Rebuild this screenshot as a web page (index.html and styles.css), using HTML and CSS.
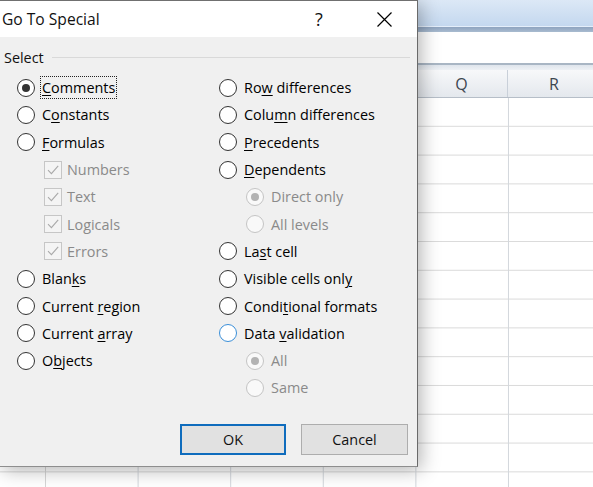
FILE: index.html
```html
<!DOCTYPE html>
<html>
<head>
<meta charset="utf-8">
<title>Go To Special</title>
<link rel="stylesheet" href="styles.css">
</head>
<body>
<div class="screen">
  <div class="excel">
    <div class="ribbon"></div>
    <div class="ribbon-edge"></div>
    <div class="formula"></div>
    <div class="hdr-sep"></div>
    <div class="colhdr">
      <div class="ch ch-first"></div>
      <div class="ch"></div>
      <div class="ch"></div>
      <div class="ch"></div>
      <div class="ch"></div>
      <div class="ch">Q</div>
      <div class="ch">R</div>
    </div>
    <div class="grid"></div>
  </div>

  <div class="dialog">
    <div class="titlebar">
      <div class="title">Go To Special</div>
      <div class="tb-btn help">?</div>
      <div class="tb-btn close">
        <svg width="15" height="15" viewBox="0 0 15 15"><path d="M0.5 0.5 L14.5 14.5 M14.5 0.5 L0.5 14.5" stroke="#000" stroke-width="1.2" fill="none"/></svg>
      </div>
    </div>
    <div class="body">
      <div class="legend">Select</div>
      <div class="options">
        <div class="col">
          <div class="opt"><span class="radio checked"></span><span class="focus"><u>C</u>omments</span></div>
          <div class="opt"><span class="radio"></span><span>C<u>o</u>nstants</span></div>
          <div class="opt"><span class="radio"></span><span><u>F</u>ormulas</span></div>
          <div class="opt sub disabled"><span class="check"><svg width="16" height="16" viewBox="0 0 16 16"><path d="M3 8.2 L6.4 11.6 L13.2 3.8" stroke="#a9a9a9" stroke-width="1.1" fill="none"/></svg></span><span>Numbers</span></div>
          <div class="opt sub disabled"><span class="check"><svg width="16" height="16" viewBox="0 0 16 16"><path d="M3 8.2 L6.4 11.6 L13.2 3.8" stroke="#a9a9a9" stroke-width="1.1" fill="none"/></svg></span><span>Text</span></div>
          <div class="opt sub disabled"><span class="check"><svg width="16" height="16" viewBox="0 0 16 16"><path d="M3 8.2 L6.4 11.6 L13.2 3.8" stroke="#a9a9a9" stroke-width="1.1" fill="none"/></svg></span><span>Logicals</span></div>
          <div class="opt sub disabled"><span class="check"><svg width="16" height="16" viewBox="0 0 16 16"><path d="M3 8.2 L6.4 11.6 L13.2 3.8" stroke="#a9a9a9" stroke-width="1.1" fill="none"/></svg></span><span>Errors</span></div>
          <div class="opt"><span class="radio"></span><span>Blan<u>k</u>s</span></div>
          <div class="opt"><span class="radio"></span><span>Current <u>r</u>egion</span></div>
          <div class="opt"><span class="radio"></span><span>Current <u>a</u>rray</span></div>
          <div class="opt"><span class="radio"></span><span>O<u>b</u>jects</span></div>
        </div>
        <div class="col">
          <div class="opt"><span class="radio"></span><span>Ro<u>w</u> differences</span></div>
          <div class="opt"><span class="radio"></span><span>Colu<u>m</u>n differences</span></div>
          <div class="opt"><span class="radio"></span><span><u>P</u>recedents</span></div>
          <div class="opt"><span class="radio"></span><span><u>D</u>ependents</span></div>
          <div class="opt sub disabled"><span class="radio checked"></span><span>Direct only</span></div>
          <div class="opt sub disabled"><span class="radio"></span><span>All levels</span></div>
          <div class="opt"><span class="radio"></span><span>La<u>s</u>t cell</span></div>
          <div class="opt"><span class="radio"></span><span>Visible cells onl<u>y</u></span></div>
          <div class="opt"><span class="radio"></span><span>Condi<u>t</u>ional formats</span></div>
          <div class="opt"><span class="radio hover"></span><span>Data <u>v</u>alidation</span></div>
          <div class="opt sub disabled"><span class="radio checked"></span><span>All</span></div>
          <div class="opt sub disabled"><span class="radio"></span><span>Same</span></div>
        </div>
      </div>
      <div class="buttons">
        <div class="btn default">OK</div>
        <div class="btn">Cancel</div>
      </div>
    </div>
  </div>
</div>
</body>
</html>
```

FILE: styles.css
```css
* { box-sizing: border-box; }
html, body { margin: 0; padding: 0; }
body { width: 593px; height: 487px; overflow: hidden; background: #fff; }

.screen {
  position: relative;
  width: 593px;
  height: 487px;
  overflow: hidden;
  font-family: "Open Sans", "Noto Sans", sans-serif;
}

/* ---------- Excel background ---------- */
.excel {
  display: flex;
  flex-direction: column;
  width: 593px;
  height: 487px;
  background: #fff;
}
.ribbon {
  height: 27px;
  background: linear-gradient(#dce8f6, #c4d8ef);
  border-bottom: 1px solid #e4eefa;
}
.ribbon-edge {
  height: 5px;
  background: linear-gradient(#8ea4bf, #a9bbd0);
}
.formula {
  height: 31px;
  background: #fff;
}
.hdr-sep {
  height: 7px;
  background: linear-gradient(#a9b6c4 0, #a9b6c4 2px, #dfe5ec 2px, #eef1f5 7px);
}
.colhdr {
  display: grid;
  grid-template-columns: 45px 93px 93px 92px 93px 92px 93px;
  height: 28px;
  background: linear-gradient(#f7f8fa, #e4e8ed);
  border-bottom: 1px solid #b6bec8;
}
.ch {
  border-right: 1px solid #c9d0d9;
  display: flex;
  align-items: center;
  justify-content: center;
  font-size: 16px;
  color: #3d4650;
}
.grid {
  flex: 1;
  background-color: #fff;
  background-image:
    linear-gradient(#d6d6d6, #d6d6d6),
    linear-gradient(90deg, #d3d7dc 1px, transparent 1px),
    linear-gradient(#dadada 1px, transparent 1px);
  background-size: 1px 100%, 92.6px 100%, 100% 28.8px;
  background-position: 45px 0, 45px 0, 0 27.8px;
  background-repeat: no-repeat, repeat-x, repeat-y;
}

/* ---------- Dialog ---------- */
.dialog {
  position: absolute;
  left: 0;
  top: 0;
  width: 418px;
  height: 467px;
  background: #f0f0f0;
  border-top: 1px solid #707070;
  border-right: 1px solid #6a6a6a;
  border-bottom: 1px solid #8e8e8e;
  box-shadow: 3px 3px 18px rgba(0, 0, 0, 0.3);
  display: flex;
  flex-direction: column;
  font-size: 14.4px;
  color: #000;
}
.titlebar {
  height: 36px;
  background: #fff;
  display: flex;
  align-items: center;
}
.title {
  flex: 1;
  padding-left: 2px;
  font-size: 15.6px;
  color: #111;
}
.tb-btn {
  width: 46px;
  height: 36px;
  display: flex;
  align-items: center;
  justify-content: center;
}
.help {
  font-size: 18px;
  color: #111;
}
.close {
  margin-left: 19px;
  margin-right: 10px;
}

.body {
  flex: 1;
  display: flex;
  flex-direction: column;
  padding-top: 10px;
}
.legend {
  display: flex;
  align-items: center;
  height: 20px;
  padding-left: 4px;
  color: #111;
}
.legend::after {
  content: "";
  flex: 1;
  height: 1px;
  background: #d9d9d9;
  margin-left: 8px;
  margin-right: 7px;
}

.options {
  display: grid;
  grid-template-columns: 202px 1fr;
  padding-left: 17px;
  margin-top: 7px;
}
.col {
  display: flex;
  flex-direction: column;
}
.opt {
  height: 27.3px;
  display: flex;
  align-items: center;
  gap: 7px;
  white-space: nowrap;
}
.opt.sub { padding-left: 27px; }
.opt.sub .check + span { margin-left: -2px; }
.opt.disabled { color: #8a8a8a; }

u {
  text-decoration-thickness: 1px;
  text-underline-offset: 2px;
}

.focus {
  outline: 1px dotted #222;
  outline-offset: 1px;
}

.radio {
  flex: none;
  width: 18px;
  height: 18px;
  border: 1.5px solid #333;
  border-radius: 50%;
  background: #fff;
  display: flex;
  align-items: center;
  justify-content: center;
}
.radio.checked::after {
  content: "";
  width: 8px;
  height: 8px;
  border-radius: 50%;
  background: #333;
}
.radio.hover { border-color: #3a8fd9; }
.disabled .radio {
  border: 1.5px solid #c4c4c4;
  background: #f9f9f9;
}
.disabled .radio.checked::after { background: #b3b3b3; }

.check {
  flex: none;
  width: 18px;
  height: 18px;
  border: 1px solid #c6c6c6;
  background: #f4f4f4;
  display: flex;
  align-items: center;
  justify-content: center;
}

.buttons {
  display: flex;
  justify-content: flex-end;
  gap: 15px;
  padding-right: 9px;
  margin-top: 22px;
}
.btn {
  width: 107px;
  height: 31px;
  background: #e1e1e1;
  border: 1px solid #adadad;
  display: flex;
  align-items: center;
  justify-content: center;
  font-size: 14.4px;
  color: #111;
}
.btn.default {
  border: 2px solid #0f6cbd;
  width: 106px;
}
```
